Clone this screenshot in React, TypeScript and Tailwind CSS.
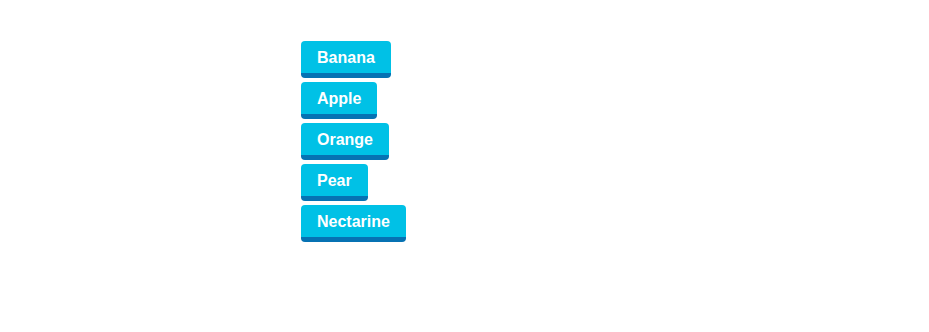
const fruits = ['Banana', 'Apple', 'Orange', 'Pear', 'Nectarine'];

export default function App() {
  return (
    <div className="min-h-[332px] w-full bg-white pl-[301px] pt-[41px] font-['Liberation_Sans',Arial,sans-serif]">
      <div className="flex flex-col items-start gap-1">
        {fruits.map((f) => (
          <button
            key={f}
            className="h-[37px] rounded-[4px] border-b-[5px] border-[#0672b3] bg-[#00c1e6] px-4 pt-[1px] text-[16px] font-bold leading-none text-white"
          >
            {f}
          </button>
        ))}
      </div>
    </div>
  );
}
